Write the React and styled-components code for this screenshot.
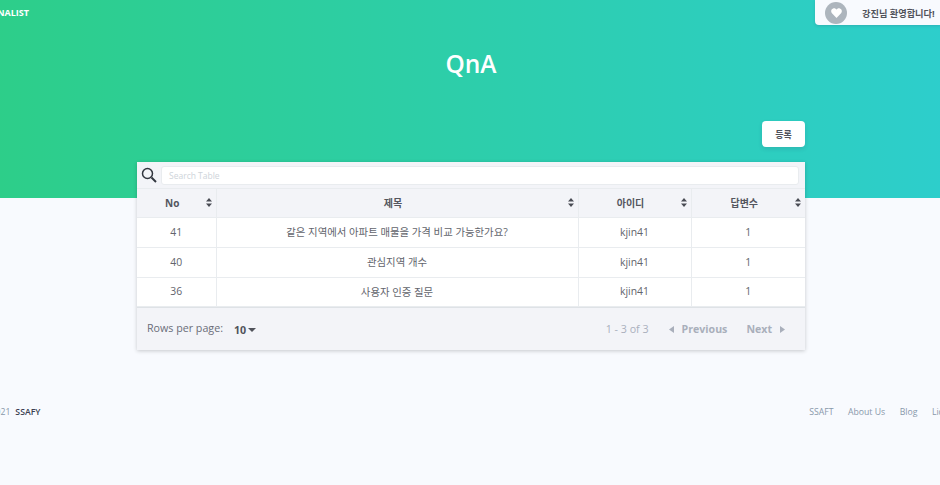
import React from "react";
import styled, { createGlobalStyle } from "styled-components";

const Global = createGlobalStyle`
  html, body { margin: 0; padding: 0; height: 100%; overflow: hidden; background: #f8fafe; }
  body { font-family: "Open Sans", "Noto Sans CJK KR", sans-serif; color: #5c5f68; }
`;
const Page = styled.div`width: 940px; height: 485px; overflow: hidden; background: #f8fafe;`;
const Hero = styled.header`
  height: 198px; box-sizing: border-box;
  background: linear-gradient(87deg, #2dce89 0, #2dcecc 100%);
  display: flex; flex-direction: column;
`;
const TopBar = styled.div`display: flex; justify-content: space-between; align-items: flex-start; height: 25px;`;
const Brand = styled.div`
  color: #fff; font-size: 9px; font-weight: 700; line-height: 25px; width: 29px;
  display: flex; justify-content: flex-end; white-space: nowrap;
`;
const Welcome = styled.div`
  width: 125px; height: 25px; box-sizing: border-box; background: #f8fafe; border-radius: 0 0 0 4px;
  box-shadow: 0 1px 3px rgba(50,50,93,.18); display: flex; align-items: center; padding-left: 10px;
  white-space: nowrap;
`;
const Avatar = styled.div`
  width: 22px; height: 22px; border-radius: 50%; background: #adb5bd; display: flex;
  align-items: center; justify-content: center; flex: none;
`;
const WelcomeText = styled.span`margin-left: 15px; font-size: 9.2px; font-weight: 700; color: #50525a;`;
const Title = styled.h1`
  margin: 20px 0 0; padding-left: 2px; text-align: center; color: #fff; font-size: 24.5px; font-weight: 600; line-height: 38px;
`;
const Actions = styled.div`display: flex; justify-content: flex-end; margin: 38px 135px 0 0;`;
const AddButton = styled.button`
  width: 43px; height: 26px; padding: 0; border: 0; border-radius: 4px; background: #fff; color: #50525a;
  font: 700 9px "Open Sans", "Noto Sans CJK KR", sans-serif;
  box-shadow: 0 2px 4px rgba(50,50,93,.14);
`;
const Card = styled.section`
  width: 668px; margin: -36px 0 0 137px; position: relative; background: #fff;
  box-shadow: 0 1px 4px rgba(0,0,0,.2);
`;
const SearchBar = styled.div`
  height: 26px; box-sizing: border-box; background: #f3f4f8; display: flex; align-items: center; padding: 0 6px 0 4px;
`;
const SearchField = styled.div`
  flex: 1; height: 19px; margin-left: 4px; box-sizing: border-box; background: #fff; border: 1px solid #e9ecef;
  border-radius: 3px; font-size: 8.5px; line-height: 17px; color: #ced4da; padding-left: 7px;
`;
const Table = styled.table`width: 668px; border-collapse: collapse; table-layout: fixed;`;
const Th = styled.th`
  height: 29px; padding: 0 8px 1px 0; box-sizing: border-box; position: relative; background: #f3f4f8;
  border: 1px solid #e9ecef; border-width: 1px 1px 1px 0; font-size: 10px; font-weight: 700; color: #54565e; text-align: center;
  &:last-child { border-right: 0; }
`;
const Sort = styled.svg`position: absolute; right: 4px; top: 9px; width: 6px; height: 9px;`;
const Td = styled.td`
  height: ${p => p.$h}px; padding: 0 0 2px; box-sizing: border-box; border: 1px solid #e9ecef; border-width: 0 1px 1px 0;
  font-size: 10.4px; text-align: center; color: #62646c;
  &:last-child { border-right: 0; }
`;
const Pager = styled.div`
  height: 43px; box-sizing: border-box; background: #f3f4f8; border-top: 1px solid #dee2e6; display: flex; align-items: center;
  padding: 0 20px 0 10px; font-size: 10.7px;
`;
const RowsLabel = styled.span`color: #6a6d78; margin-top: -3px;`;
const RowsValue = styled.span`font-weight: 700; color: #50525a; margin-left: 11px; margin-top: 1px; display: flex; align-items: center; gap: 2px;`;
const Range = styled.span`margin-left: auto; color: #aab0bd;`;
const PageLink = styled.span`
  color: #a9afbb; font-weight: 700; font-size: 10.6px; display: flex; align-items: center; gap: 8px;
  margin-left: ${p => p.$ml}px;
`;
const Foot = styled.footer`
  display: flex; justify-content: space-between; margin-top: 55px; font-size: 8.7px; line-height: 14px; color: #8898aa;
  white-space: nowrap; overflow: hidden;
`;
const Copy = styled.div`margin-left: -19px;`;
const CopyBrand = styled.b`font-weight: 600; margin-left: 5px; color: #3a3f52;`;
const Links = styled.nav`display: flex; gap: 14.5px; margin-right: -22px;`;

const Caret = ({ dir }) => (
  <svg width="5" height="7" viewBox="0 0 5 7">
    <path d={dir === "l" ? "M5 0v7L0 3.5z" : "M0 0v7l5-3.5z"} fill="#a9afbb" />
  </svg>
);
const SortIcon = () => (
  <Sort viewBox="0 0 6 9"><path d="M3 0l3 3.4H0zM3 9L0 5.6h6z" fill="#4a4c54" /></Sort>
);
const rows = [
  ["41", "같은 지역에서 아파트 매물을 가격 비교 가능한가요?", "kjin41", "1", 30],
  ["40", "관심지역 개수", "kjin41", "1", 30],
  ["36", "사용자 인증 질문", "kjin41", "1", 29],
];
const heads = [["No", 79], ["제목", 362], ["아이디", 113], ["답변수", 114]];

export default function App() {
  return (
    <Page>
      <Global />
      <Hero>
        <TopBar>
          <Brand>APT ANALIST</Brand>
          <Welcome>
            <Avatar>
              <svg width="11" height="10" viewBox="0 0 24 22"><path d="M12 22L2 11.500C-1 8 0 2.500 4.500 1 7.500 0 10.500 1 12 4c1.500-3 4.500-4 7.500-3C24 2.500 25 8 22 11.500z" fill="#fff" /></svg>
            </Avatar>
            <WelcomeText>강진님 환영합니다!</WelcomeText>
          </Welcome>
        </TopBar>
        <Title>QnA</Title>
        <Actions><AddButton>등록</AddButton></Actions>
      </Hero>
      <Card>
        <SearchBar>
          <svg width="16" height="16" viewBox="0 0 16 16" fill="none" stroke="#32363f">
            <circle cx="6.500" cy="6.500" r="5" strokeWidth="1.500" />
            <path d="M10.500 10.500L15 15" strokeWidth="2" />
          </svg>
          <SearchField>Search Table</SearchField>
        </SearchBar>
        <Table>
          <colgroup>{heads.map(([h, w]) => <col key={h} width={w} />)}</colgroup>
          <thead>
            <tr>{heads.map(([h]) => <Th key={h}>{h}<SortIcon /></Th>)}</tr>
          </thead>
          <tbody>
            {rows.map(r => (
              <tr key={r[0]}>
                {r.slice(0, 4).map((c, i) => <Td key={i} $h={r[4]}>{c}</Td>)}
              </tr>
            ))}
          </tbody>
        </Table>
        <Pager>
          <RowsLabel>Rows per page:</RowsLabel>
          <RowsValue>10<svg width="8" height="4" viewBox="0 0 8 4"><path d="M0 0h8L4 4z" fill="#50525a" /></svg></RowsValue>
          <Range>1 - 3 of 3</Range>
          <PageLink $ml={20}><Caret dir="l" />Previous</PageLink>
          <PageLink $ml={19}>Next<Caret dir="r" /></PageLink>
        </Pager>
      </Card>
      <Foot>
        <Copy>© 2021<CopyBrand>SSAFY</CopyBrand></Copy>
        <Links><span>SSAFT</span><span>About Us</span><span>Blog</span><span>License</span></Links>
      </Foot>
    </Page>
  );
}
